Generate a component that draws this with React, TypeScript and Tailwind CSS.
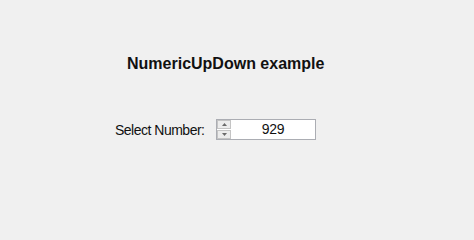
export default function App() {
  return (
    <div
      className="w-[474px] h-[240px] bg-[#f0f0f0] pt-[55px] flex flex-col"
      style={{ fontFamily: '"Liberation Sans", Arial, sans-serif' }}
    >
      <div className="pl-[127px] text-[16px] leading-[18px] font-bold text-[#111]">
        NumericUpDown example
      </div>
      <div className="mt-[46px] pl-[115px] flex items-center">
        <span className="w-[101px] text-[14px] tracking-[-0.5px] leading-[16px] text-[#111]">
          Select Number:
        </span>
        <div className="w-[100px] h-[21px] border border-[#abadb3] bg-white flex items-stretch">
          <div className="w-[14px] flex flex-col gap-[1px]">
            <div className="flex-1 border border-[#c4c4c4] bg-[#ececec] flex items-center justify-center">
              <svg width="5" height="3" viewBox="0 0 5 3">
                <path d="M0 3 L2.5 0 L5 3 Z" fill="#6a6a6a" />
              </svg>
            </div>
            <div className="flex-1 border border-[#c4c4c4] bg-[#ececec] flex items-center justify-center">
              <svg width="5" height="3" viewBox="0 0 5 3">
                <path d="M0 0 L2.5 3 L5 0 Z" fill="#6a6a6a" />
              </svg>
            </div>
          </div>
          <div className="flex-1 flex items-center justify-center text-[14px] tracking-[-0.3px] text-[#111]">
            929
          </div>
        </div>
      </div>
    </div>
  );
}
